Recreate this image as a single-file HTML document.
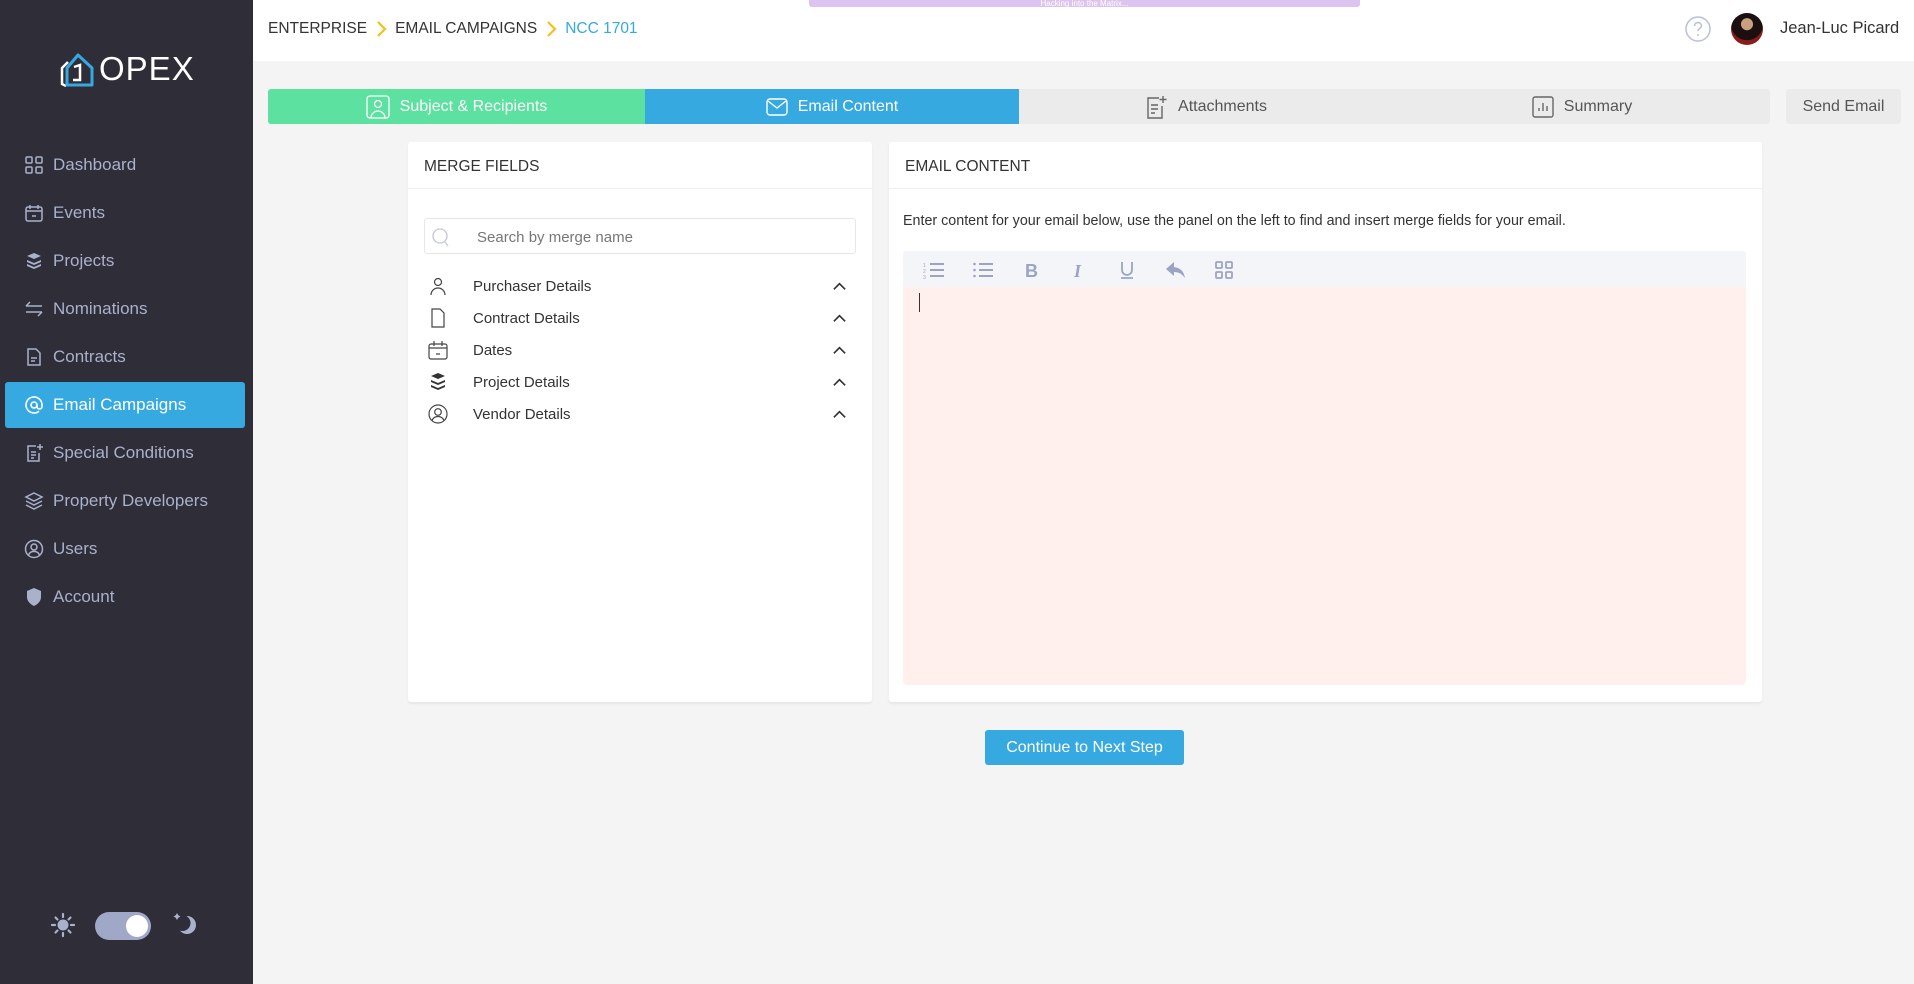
<!DOCTYPE html>
<html><head><meta charset="utf-8"><style>
*{box-sizing:border-box;margin:0;padding:0}
body{width:1914px;height:984px;overflow:hidden;background:#f4f4f4;font-family:"Liberation Sans",sans-serif;position:relative}
.abs{position:absolute}
.side{left:0;top:0;width:253px;height:984px;background:#2e2d38}
.nav{position:absolute;left:5px;width:240px;height:46px;display:flex;align-items:center;color:#a9b1cb;font-size:17px}
.nav svg{position:absolute;left:19px;width:20px;height:20px}
.nav span{position:absolute;left:48px}
.nav.act{background:#36a9e1;color:#fff;border-radius:3px}
.hdr{left:253px;top:0;width:1661px;height:61px;background:#fff}
.tab{position:absolute;top:89px;height:35px;display:flex;align-items:center;justify-content:center;font-size:16px;gap:10px}
.panel{position:absolute;top:142px;height:560px;background:#fff;border-radius:3px;box-shadow:0 2px 2px #e6e6e6}
.ph{height:47px;border-bottom:1px solid #eee;font-size:15.5px;color:#333;padding:16px 0 0 16px}
.row{position:absolute;left:16px;width:440px;height:30px;font-size:15px;color:#333;display:flex;align-items:center}
.row svg.i{position:absolute;left:4px;width:20px;height:20px}
.row span{position:absolute;left:49px}
.row svg.c{position:absolute;right:17px;width:15px;height:15px}
.tb svg{position:absolute;top:10px;width:22px;height:18px}
</style></head><body>
<div class="abs side">
 <svg class="abs" style="left:58px;top:50px" width="40" height="38" viewBox="0 0 40 38"><path d="M10 12 L4 18 L4 34 L8 36" fill="none" stroke="#fff" stroke-width="2.5"/><path d="M9 18 L20 5 L34 18 L34 35 L9 35 Z" fill="none" stroke="#36a9e1" stroke-width="3" stroke-linejoin="round"/><path d="M16 17 L22 15 L22 30 L15 30" fill="none" stroke="#fff" stroke-width="2.5"/></svg>
 <div class="abs" style="left:99px;top:50px;font-size:33px;color:#fff;letter-spacing:1px">OPEX</div>

 <div class="nav" style="top:142px"><svg viewBox="0 0 20 20" fill="none" stroke="#a9b1cb" stroke-width="1.5"><rect x="2" y="2" width="6" height="6" rx="1"/><rect x="12" y="2" width="6" height="6" rx="1"/><rect x="2" y="12" width="6" height="6" rx="1"/><rect x="12" y="12" width="6" height="6" rx="1"/></svg><span>Dashboard</span></div>
 <div class="nav" style="top:190px"><svg viewBox="0 0 20 20" fill="none" stroke="#a9b1cb" stroke-width="1.5"><rect x="2" y="4" width="16" height="14" rx="2"/><path d="M2 8h16M6 2v4M14 2v4M8 13h4"/></svg><span>Events</span></div>
 <div class="nav" style="top:238px"><svg viewBox="0 0 20 20" fill="#a9b1cb"><path d="M10 2l7 3-7 3-7-3zM3 9l7 3 7-3v2l-7 3-7-3zM3 13l7 3 7-3v2l-7 3-7-3z"/></svg><span>Projects</span></div>
 <div class="nav" style="top:286px"><svg viewBox="0 0 20 20" fill="none" stroke="#a9b1cb" stroke-width="1.5"><path d="M2 7h16M6 3L2 7M18 13H2M14 17l4-4"/></svg><span>Nominations</span></div>
 <div class="nav" style="top:334px"><svg viewBox="0 0 20 20" fill="none" stroke="#a9b1cb" stroke-width="1.5"><path d="M4 2h8l4 4v12H4z M7 11h6M7 14h4"/></svg><span>Contracts</span></div>
 <div class="nav act" style="top:382px"><svg viewBox="0 0 20 20" fill="none" stroke="#fff" stroke-width="1.6"><circle cx="10" cy="10" r="3"/><path d="M13 10v1.5a2.5 2.5 0 005 0V10a8 8 0 10-3 6.2"/></svg><span>Email Campaigns</span></div>
 <div class="nav" style="top:430px"><svg viewBox="0 0 20 20" fill="none" stroke="#a9b1cb" stroke-width="1.5"><path d="M12 3H4v15h11v-8 M7 9h5M7 12h5M7 15h3 M16 1v6M13 4h6"/></svg><span>Special Conditions</span></div>
 <div class="nav" style="top:478px"><svg viewBox="0 0 20 20" fill="none" stroke="#a9b1cb" stroke-width="1.5"><path d="M10 2l8 4-8 4-8-4z M2 10l8 4 8-4 M2 14l8 4 8-4"/></svg><span>Property Developers</span></div>
 <div class="nav" style="top:526px"><svg viewBox="0 0 20 20" fill="none" stroke="#a9b1cb" stroke-width="1.5"><circle cx="10" cy="10" r="8.5"/><circle cx="10" cy="8" r="3"/><path d="M4.5 16a6 6 0 0111 0"/></svg><span>Users</span></div>
 <div class="nav" style="top:574px"><svg viewBox="0 0 20 20" fill="#a9b1cb"><path d="M10 1l7 3v6c0 4-3 7-7 9-4-2-7-5-7-9V4z"/></svg><span>Account</span></div>

 <svg class="abs" style="left:50px;top:912px" width="26" height="26" viewBox="0 0 26 26"><circle cx="13" cy="13" r="5.5" fill="#a9b1cb"/><g stroke="#a9b1cb" stroke-width="2.2" stroke-linecap="round"><path d="M13 2v3M13 21v3M2 13h3M21 13h3M5.5 5.5l2 2M18.5 18.5l2 2M5.5 20.5l2-2M18.5 7.5l2-2"/></g></svg>
 <div class="abs" style="left:95px;top:912px;width:56px;height:28px;border-radius:14px;background:#a0a8c8"><div class="abs" style="left:31px;top:3px;width:22px;height:22px;border-radius:50%;background:#fff"></div></div>
 <svg class="abs" style="left:172px;top:911px" width="26" height="26" viewBox="0 0 26 26"><circle cx="15" cy="14" r="9" fill="#a9b1cb"/><circle cx="10.5" cy="12" r="8" fill="#2e2d38"/><path d="M5 2l1.3 2.2L8.5 5.5 6.3 6.8 5 9 3.7 6.8 1.5 5.5l2.2-1.3z" fill="#a9b1cb"/></svg>
</div>

<div class="abs hdr"></div>
<div class="abs" style="left:809px;top:0;width:551px;height:7px;background:#dcc3f0;border-radius:0 0 3px 3px;font-size:8px;color:#fff;text-align:center;line-height:7px;overflow:hidden">Hacking into the Matrix...</div>
<div class="abs" style="left:268px;top:20px;font-size:15.5px;color:#333;display:flex;gap:7px;align-items:center">
 <span>ENTERPRISE</span><svg width="14" height="18" viewBox="0 0 14 18"><path d="M4 2l7 7-7 7" fill="none" stroke="#f2c21b" stroke-width="2.2"/></svg>
 <span>EMAIL CAMPAIGNS</span><svg width="14" height="18" viewBox="0 0 14 18"><path d="M4 2l7 7-7 7" fill="none" stroke="#f2c21b" stroke-width="2.2"/></svg>
 <span style="color:#36a9e1">NCC 1701</span></div>
<svg class="abs" style="left:1685px;top:16px" width="26" height="26" viewBox="0 0 26 26"><circle cx="13" cy="13" r="12" fill="none" stroke="#b8c0dc" stroke-width="1.5"/><path d="M9.5 10a3.5 3.5 0 117 0c0 2.5-3.5 2.5-3.5 5" fill="none" stroke="#b8c0dc" stroke-width="1.5"/><circle cx="13" cy="19" r="1" fill="#b8c0dc"/></svg>
<div class="abs" style="left:1731px;top:13px;width:32px;height:32px;border-radius:50%;background:radial-gradient(circle at 50% 35%,#c9a080 0 22%,#1a1010 24% 60%,#8a1c1c 62%)"></div>
<div class="abs" style="left:1780px;top:19px;font-size:16.5px;color:#333">Jean-Luc Picard</div>

<div class="tab" style="left:268px;width:377px;background:#5ce1a0;color:#fff;border-radius:3px 0 0 3px"><svg width="24" height="24" viewBox="0 0 24 24" fill="none" stroke="#fff" stroke-width="1.3"><rect x="1" y="1" width="22" height="22" rx="3"/><circle cx="12" cy="9" r="3.5"/><path d="M5 23a7 7 0 0114 0"/></svg>Subject &amp; Recipients</div>
<div class="tab" style="left:645px;width:374px;background:#36a9e1;color:#fff"><svg width="22" height="18" viewBox="0 0 22 18" fill="none" stroke="#fff" stroke-width="1.4"><rect x="1" y="1" width="20" height="16" rx="3"/><path d="M2 3l9 7 9-7"/></svg>Email Content</div>
<div class="tab" style="left:1019px;width:375px;background:#ebebeb;color:#555"><svg width="22" height="24" viewBox="0 0 22 24" fill="none" stroke="#666" stroke-width="1.4"><path d="M13 3H2v20h14V11 M5 10h7M5 14h7M5 18h4 M17 1v7M13.5 4.5h7"/></svg>Attachments</div>
<div class="tab" style="left:1394px;width:376px;background:#ebebeb;color:#555;border-radius:0 3px 3px 0"><svg width="22" height="22" viewBox="0 0 22 22" fill="none" stroke="#666" stroke-width="1.4"><rect x="1" y="1" width="20" height="20" rx="2"/><path d="M7 15v-3M11 15V7M15 15v-5"/></svg>Summary</div>
<div class="tab" style="left:1786px;width:115px;background:#ebebeb;color:#555;border-radius:3px">Send Email</div>

<div class="panel" style="left:408px;width:464px">
 <div class="ph">MERGE FIELDS</div>
 <div class="abs" style="left:16px;top:76px;width:432px;height:36px;border:1px solid #e6e6e6;border-radius:3px">
  <svg class="abs" style="left:6px;top:8px" width="22" height="22" viewBox="0 0 22 22" fill="none" stroke="#c4c8d4" stroke-width="1.3"><circle cx="9" cy="9" r="7"/><path d="M14 15l3 4"/></svg>
  <div class="abs" style="left:52px;top:10px;font-size:15px;color:#777">Search by merge name</div></div>
 <div class="row" style="top:129px"><svg class="i" viewBox="0 0 20 20" fill="none" stroke="#444" stroke-width="1.2"><circle cx="10" cy="6" r="3.5"/><path d="M3 19a7 7 0 0114 0"/></svg><span>Purchaser Details</span><svg class="c" viewBox="0 0 16 16"><path d="M2 11l6-6 6 6" fill="none" stroke="#333" stroke-width="1.8"/></svg></div>
 <div class="row" style="top:161px"><svg class="i" viewBox="0 0 20 20" fill="none" stroke="#444" stroke-width="1.2"><path d="M4 1h8l4 4v14H4z"/></svg><span>Contract Details</span><svg class="c" viewBox="0 0 16 16"><path d="M2 11l6-6 6 6" fill="none" stroke="#333" stroke-width="1.8"/></svg></div>
 <div class="row" style="top:193px"><svg class="i" viewBox="0 0 20 20" fill="none" stroke="#444" stroke-width="1.2"><rect x="1" y="4" width="18" height="15" rx="2"/><path d="M1 8h18M6 1v5M14 1v5M8 14h4"/></svg><span>Dates</span><svg class="c" viewBox="0 0 16 16"><path d="M2 11l6-6 6 6" fill="none" stroke="#333" stroke-width="1.8"/></svg></div>
 <div class="row" style="top:225px"><svg class="i" viewBox="0 0 20 20" fill="#333"><path d="M10 1l7 3-7 3-7-3zM3 8l7 3 7-3v2l-7 3-7-3zM3 13l7 3 7-3v2l-7 3-7-3z"/></svg><span>Project Details</span><svg class="c" viewBox="0 0 16 16"><path d="M2 11l6-6 6 6" fill="none" stroke="#333" stroke-width="1.8"/></svg></div>
 <div class="row" style="top:257px"><svg class="i" viewBox="0 0 20 20" fill="none" stroke="#444" stroke-width="1.2"><circle cx="10" cy="10" r="9"/><circle cx="10" cy="8" r="3.3"/><path d="M4 16.5a6.5 6.5 0 0112 0"/></svg><span>Vendor Details</span><svg class="c" viewBox="0 0 16 16"><path d="M2 11l6-6 6 6" fill="none" stroke="#333" stroke-width="1.8"/></svg></div>
</div>

<div class="panel" style="left:889px;width:873px">
 <div class="ph">EMAIL CONTENT</div>
 <div class="abs" style="left:14px;top:71px;font-size:14.3px;color:#333">Enter content for your email below, use the panel on the left to find and insert merge fields for your email.</div>
 <div class="abs tb" style="left:14px;top:109px;width:843px;height:36px;background:#f4f5f9;border-radius:3px 3px 0 0">
  <svg style="left:20px" viewBox="0 0 22 18" fill="#9ca4c4"><rect x="7" y="2" width="14" height="2"/><rect x="7" y="8" width="14" height="2"/><rect x="7" y="14" width="14" height="2"/><text x="0" y="6" font-size="5" font-family="Liberation Sans">1</text><text x="0" y="12" font-size="5" font-family="Liberation Sans">2</text><text x="0" y="18" font-size="5" font-family="Liberation Sans">3</text></svg>
  <svg style="left:69px" viewBox="0 0 22 18" fill="#9ca4c4"><rect x="7" y="2" width="14" height="2"/><rect x="7" y="8" width="14" height="2"/><rect x="7" y="14" width="14" height="2"/><circle cx="2.5" cy="3" r="1.3"/><circle cx="2.5" cy="9" r="1.3"/><circle cx="2.5" cy="15" r="1.3"/></svg>
  <svg style="left:117px" viewBox="0 0 22 18"><text x="5" y="16" font-size="18" font-weight="bold" fill="#9ca4c4" font-family="Liberation Sans">B</text></svg>
  <svg style="left:165px" viewBox="0 0 22 18"><text x="6" y="16" font-size="18" font-weight="bold" font-style="italic" fill="#9ca4c4" font-family="Liberation Serif">I</text></svg>
  <svg style="left:213px" viewBox="0 0 22 18" fill="none" stroke="#9ca4c4" stroke-width="1.8"><path d="M6 1v8a5 5 0 0010 0V1M5 17h12"/></svg>
  <svg style="left:262px" viewBox="0 0 22 18" fill="#9ca4c4"><path d="M9 1L1 8l8 7v-4c5 0 8 2 11 6-1-6-4-10-11-11z"/></svg>
  <svg style="left:310px" viewBox="0 0 22 18" fill="none" stroke="#9ca4c4" stroke-width="1.8"><rect x="3" y="1" width="6" height="6" rx="1"/><rect x="13" y="1" width="6" height="6" rx="1"/><rect x="3" y="11" width="6" height="6" rx="1"/><rect x="13" y="11" width="6" height="6" rx="1"/></svg>
 </div>
 <div class="abs" style="left:14px;top:145px;width:843px;height:398px;background:#fff0ee;border-radius:0 0 4px 4px"><div class="abs" style="left:16px;top:6px;width:1px;height:19px;background:#333"></div></div>
</div>

<div class="abs" style="left:985px;top:730px;width:199px;height:35px;background:#36a9e1;border-radius:3px;color:#fff;font-size:16px;text-align:center;line-height:35px">Continue to Next Step</div>
</body></html>
